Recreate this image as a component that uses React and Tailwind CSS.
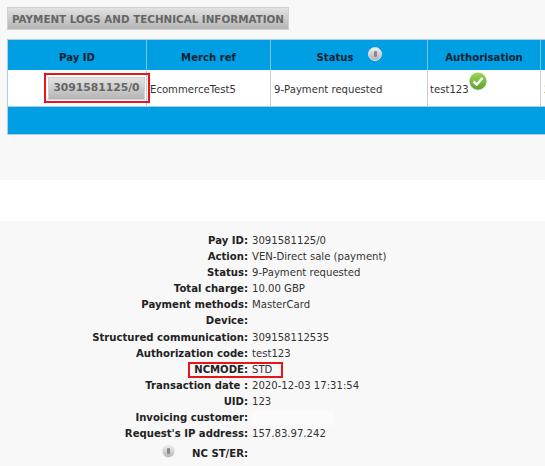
import React from 'react';

const DETAILS = [
  { label: 'Pay ID:', value: '3091581125/0' },
  { label: 'Action:', value: 'VEN-Direct sale (payment)' },
  { label: 'Status:', value: '9-Payment requested' },
  { label: 'Total charge:', value: '10.00 GBP' },
  { label: 'Payment methods:', value: 'MasterCard' },
  { label: 'Device:', value: '' },
  { label: 'Structured communication:', value: '309158112535' },
  { label: 'Authorization code:', value: 'test123' },
  { label: 'NCMODE:', value: 'STD', boxed: true },
  { label: 'Transaction date :', value: '2020-12-03 17:31:54' },
  { label: 'UID:', value: '123' },
  { label: 'Invoicing customer:', value: '', blurred: true },
  { label: "Request's IP address:", value: '157.83.97.242' },
];

function InfoDot({ className }) {
  return (
    <span className={`flex items-center justify-center rounded-full bg-gradient-to-b from-[#eeeeee] to-[#b4b4b4] border border-[#e2e2e2] ${className}`}>
      <span className="w-[3px] h-[6px] bg-[#888888] rounded-[1px]" />
    </span>
  );
}

function CheckBadge() {
  return (
    <svg width="18" height="19" viewBox="0 0 18 19" className="mb-[16px] shrink-0">
      <defs>
        <linearGradient id="badge" x1="0" y1="0" x2="0" y2="1">
          <stop offset="0" stopColor="#9fd65a" />
          <stop offset="1" stopColor="#58a52a" />
        </linearGradient>
      </defs>
      <circle cx="9" cy="10" r="8.5" fill="#c9c9c9" />
      <circle cx="9" cy="9" r="8.5" fill="url(#badge)" />
      <path d="M4.5 9.5 L7.7 12.5 L13.5 6" fill="none" stroke="#ffffff" strokeWidth="2.6" />
    </svg>
  );
}

export default function App() {
  return (
    <div className="w-[545px] h-[466px] overflow-hidden bg-white text-[10.1px] text-[#333333] font-['DejaVu_Sans',Verdana,sans-serif]">
      <div className="h-[180px] bg-[#f8f8f8] pt-[7px] pl-[7px]">
        <div className="w-[282px] h-[23px] pt-[2px] flex items-center justify-center bg-gradient-to-b from-[#e2e2e2] to-[#b5b5b5] border border-[#d0d0d0] text-[#666666] font-bold text-[10.35px] whitespace-nowrap">
          PAYMENT LOGS AND TECHNICAL INFORMATION
        </div>

        <div className="mt-[9px] w-[538px] border-l border-t border-b border-[#b4cbd8] overflow-hidden">
          <div className="flex h-[30px] bg-[#009fe3] font-bold text-[#0a2233]">
            <div className="w-[139px] shrink-0 pt-[6px] flex items-center justify-center border-r border-[#7cc4e6]">Pay ID</div>
            <div className="w-[124px] shrink-0 pt-[6px] flex items-center justify-center border-r border-[#7cc4e6]">Merch ref</div>
            <div className="w-[157px] shrink-0 relative pt-[6px] pr-[28px] flex items-center justify-center border-r border-[#7cc4e6]">
              Status
              <InfoDot className="absolute left-[97px] top-[7px] w-[14px] h-[14px]" />
            </div>
            <div className="w-[113px] shrink-0 pt-[6px] flex items-center justify-center border-r border-[#7cc4e6]">Authorisation</div>
          </div>
          <div className="flex h-[37px] bg-white border-b border-[#b4cbd8]">
            <div className="w-[139px] shrink-0 relative flex items-center justify-end pr-[1px] border-r border-[#cccccc]">
              <div className="w-[97px] h-[23px] pt-[1px] flex items-center justify-center bg-gradient-to-b from-[#e2e2e2] to-[#b5b5b5] border border-[#d0d0d0] text-[#666666] font-bold text-[10.75px]">
                3091581125/0
              </div>
              <div className="absolute left-[36px] top-[3px] w-[106px] h-[30px] border-2 border-[#e8141c]" />
            </div>
            <div className="w-[124px] shrink-0 pt-[3px] flex items-center pl-[3px] border-r border-[#cccccc]">EcommerceTest5</div>
            <div className="w-[157px] shrink-0 pt-[3px] flex items-center pl-[3px] border-r border-[#cccccc]">9-Payment requested</div>
            <div className="w-[113px] shrink-0 pt-[3px] flex items-center pl-[2px] border-r border-[#cccccc]">
              test123
              <CheckBadge />
            </div>
            <div className="flex pt-[3px] items-center pl-[3px]">2</div>
          </div>
          <div className="h-[27px] bg-[#009fe3]" />
        </div>
      </div>

      <div className="h-[41px] bg-white" />

      <div className="h-[245px] bg-[#f8f8f8] pt-[11.5px]">
        {DETAILS.map(row => (
          <div key={row.label} className="flex h-[16.1px] items-center">
            <div className="w-[248px] shrink-0 text-right font-bold text-[#222222] whitespace-nowrap">{row.label}</div>
            <div className="pl-[4px] relative whitespace-nowrap">
              {row.value}
              {row.blurred && <div className="w-[82px] h-[14px] bg-[#fbfbfb]" />}
              {row.boxed && <div className="absolute left-[-60px] top-0 w-[95px] h-[16px] border-2 border-[#e8141c]" />}
            </div>
          </div>
        ))}
        <div className="flex h-[20px] items-center relative">
          <InfoDot className="absolute left-[162px] top-[3px] w-[13px] h-[13px]" />
          <div className="w-[248px] shrink-0 text-right font-bold text-[#222222] pt-[3px]">NC ST/ER:</div>
        </div>
      </div>
    </div>
  );
}
